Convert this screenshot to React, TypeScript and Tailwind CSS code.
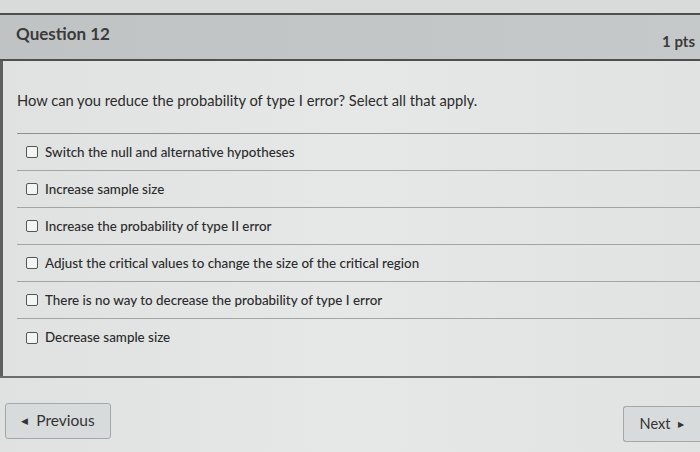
const options = [
  "Switch the null and alternative hypotheses",
  "Increase sample size",
  "Increase the probability of type II error",
  "Adjust the critical values to change the size of the critical region",
  "There is no way to decrease the probability of type I error",
  "Decrease sample size",
];

export default function App() {
  return (
    <div className="h-[452px] w-[700px] overflow-hidden bg-gradient-to-r from-[#e0e2e1] via-[#e6e8e7] to-[#e1e3e3] font-['Lato',sans-serif] text-[#2b2c2c]">
      <div className="h-[15px] border-b-2 border-[#4e5050] bg-[#d9dbdb]" />
      <section className="border-b-2 border-[#6b6d6d]">
        <header className="flex h-[46px] justify-between border-b-2 border-[#4e5050] bg-gradient-to-r from-[#c0c3c3] to-[#c6c9c9] pl-[16px] pr-[5px]">
          <h2 className="mt-[6px] text-[17px] font-bold text-[#3a3b3b]">Question 12</h2>
          <span className="mt-[15px] text-[15px] font-bold text-[#3a3b3b]">1 pts</span>
        </header>
        <div className="border-l-[3px] border-[#5e6060]">
          <p className="pb-[22px] pl-[14px] pt-[28px] text-[14.7px]">
            How can you reduce the probability of type I error? Select all that apply.
          </p>
          <ul className="ml-[14px] border-t border-[#8e9090] pb-[20px]">
            {options.map((o, i) => (
              <li
                key={o}
                className={`flex h-[37px] items-center gap-[7px] pl-[9px] text-[13.4px] font-medium ${
                  i < options.length - 1 ? "border-b border-[#a3a5a5]" : ""
                }`}
              >
                <span className="h-[12px] w-[12px] shrink-0 rounded-[2px] border border-[#555757] bg-[#f3f4f4]" />
                {o}
              </li>
            ))}
          </ul>
        </div>
      </section>
      <nav className="flex items-start justify-between pl-[5px] pt-[25px]">
        <button className="flex h-[36px] w-[106px] items-center justify-center gap-[8px] rounded-[3px] border border-[#a5a8a8] bg-[#d8dbdb] text-[15.5px] text-[#333]">
          <span className="text-[9px]">◀</span>
          Previous
        </button>
        <button className="mt-[3px] flex h-[36px] w-[77px] items-center justify-center gap-[8px] rounded-l-[3px] border border-r-0 border-[#a5a8a8] bg-[#d8dbdb] text-[14.5px] text-[#333]">
          Next
          <span className="text-[8px]">▶</span>
        </button>
      </nav>
    </div>
  );
}
